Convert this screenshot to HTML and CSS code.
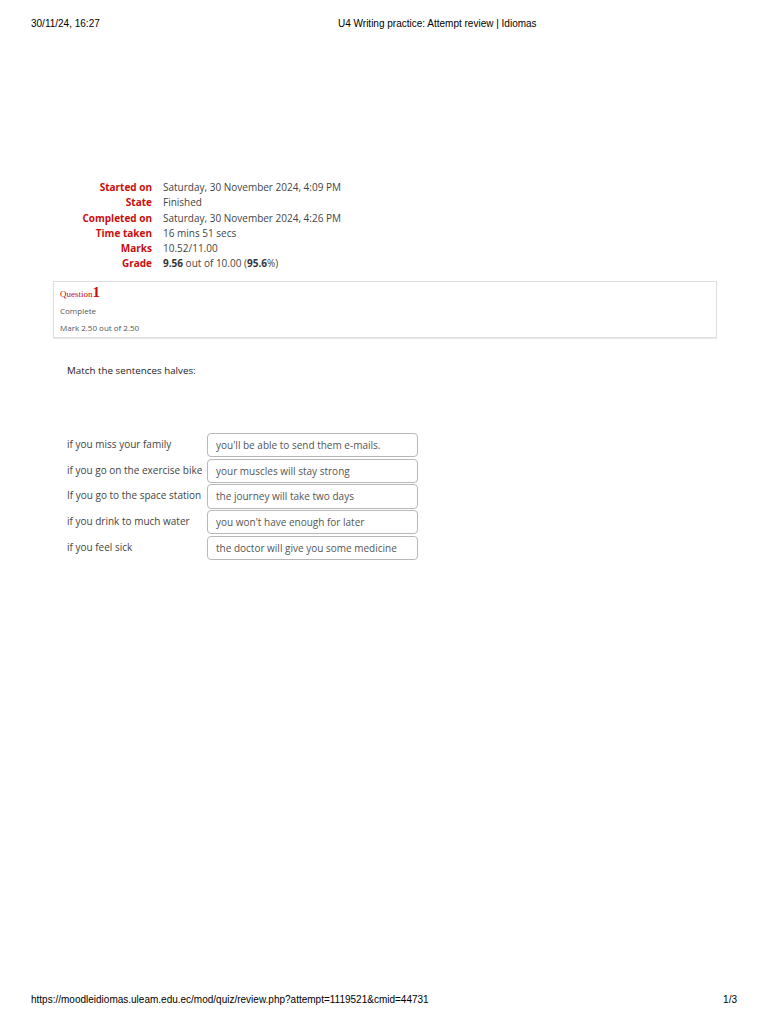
FILE: index.html
```html
<!DOCTYPE html>
<html lang="en">
<head>
    <meta charset="UTF-8">
    <meta name="viewport" content="width=device-width, initial-scale=1.0">
    <title>U4 Writing practice: Attempt review | Idiomas</title>
    <link rel="stylesheet" href="styles.css">
</head>
<body>
    <header class="printHead">
        <span class="date">30/11/24, 16:27</span>
        <span class="title">U4 Writing practice: Attempt review | Idiomas</span>
    </header>

    <main class="page">
        <table class="summary">
            <tr><th>Started on</th><td>Saturday, 30 November 2024, 4:09 PM</td></tr>
            <tr><th>State</th><td>Finished</td></tr>
            <tr><th>Completed on</th><td>Saturday, 30 November 2024, 4:26 PM</td></tr>
            <tr><th>Time taken</th><td>16 mins 51 secs</td></tr>
            <tr><th>Marks</th><td>10.52/11.00</td></tr>
            <tr><th>Grade</th><td><b>9.56</b> out of 10.00 (<b>95.6</b>%)</td></tr>
        </table>

        <div class="info">
            <h3 class="qno">Question<span>1</span></h3>
            <div class="state">Complete</div>
            <div class="grade">Mark 2.50 out of 2.50</div>
        </div>

        <div class="content">
            <p class="qtext">Match the sentences halves:</p>
            <div class="answers">
                <div class="row">
                    <span class="text">if you miss your family</span>
                    <span class="select">you'll be able to send them e-mails.</span>
                </div>
                <div class="row">
                    <span class="text">if you go on the exercise bike</span>
                    <span class="select">your muscles will stay strong</span>
                </div>
                <div class="row">
                    <span class="text">If you go to the space station</span>
                    <span class="select">the journey will take two days</span>
                </div>
                <div class="row">
                    <span class="text">if you drink to much water</span>
                    <span class="select">you won't have enough for later</span>
                </div>
                <div class="row">
                    <span class="text">if you feel sick</span>
                    <span class="select">the doctor will give you some medicine</span>
                </div>
            </div>
        </div>
    </main>

    <footer class="printFoot">
        <span>https://moodleidiomas.uleam.edu.ec/mod/quiz/review.php?attempt=1119521&amp;cmid=44731</span>
        <span>1/3</span>
    </footer>
</body>
</html>
```

FILE: styles.css
```css
html, body{
    margin: 0;
    padding: 0;
}
body{
    width: 768px;
    height: 1024px;
    display: flex;
    flex-direction: column;
    background-color: #fff;
    font-family: 'Open Sans', 'Noto Sans', sans-serif;
    color: #333;
}
.printHead, .printFoot{
    font-family: 'Liberation Sans', Arial, sans-serif;
    font-size: 10px;
    color: #000;
    display: flex;
}
.printHead{
    padding: 18px 30px 0 31px;
    height: 19px;
}
.printHead .date{
    width: 307px;
}
.printFoot{
    justify-content: space-between;
    padding: 0 31px 19px 31px;
}
.page{
    flex: 1;
    padding: 143px 0 0 53px;
    width: 664px;
}
/* ____________ summary table ____________ */
.summary{
    border-collapse: collapse;
    font-size: 10px;
}
.summary th{
    color: #c90d0d;
    font-weight: 700;
    text-align: right;
    width: 99px;
    padding: 0 11px 0 0;
    line-height: 15.3px;
    white-space: nowrap;
}
.summary td{
    color: #444;
    padding: 0;
    line-height: 15.3px;
    white-space: nowrap;
}
.summary b{
    color: #333;
}
/* ____________ question info ____________ */
.info{
    margin-top: 9px;
    border: 1px solid #dedede;
    box-shadow: 0 1px 1px rgba(0, 0, 0, 0.08);
    padding: 3px 6px 4px 6px;
    height: 48px;
}
.qno{
    margin: 0;
    font-family: 'Liberation Serif', 'Times New Roman', serif;
    font-weight: 400;
    color: #c90d0d;
    font-size: 9px;
    line-height: 15px;
}
.qno span{
    font-size: 15px;
    font-weight: 700;
}
.state, .grade{
    font-size: 8px;
    color: #555;
    line-height: 17px;
}
/* ____________ question content ____________ */
.content{
    padding: 25px 0 0 14px;
}
.qtext{
    margin: 0;
    font-size: 9.8px;
    color: #1d2125;
    line-height: 16px;
}
.answers{
    margin-top: 54px;
    display: flex;
    flex-direction: column;
    gap: 1.5px;
}
.row{
    display: flex;
    align-items: flex-start;
    height: 24.3px;
}
.row .text{
    width: 140px;
    font-size: 10px;
    color: #444;
    padding-top: 4px;
    white-space: nowrap;
}
.row .select{
    box-sizing: border-box;
    width: 211px;
    height: 24.3px;
    border: 1px solid #b8b8b8;
    border-radius: 4px;
    padding: 0 8px;
    font-size: 10px;
    color: #555;
    line-height: 23px;
    white-space: nowrap;
}
```
